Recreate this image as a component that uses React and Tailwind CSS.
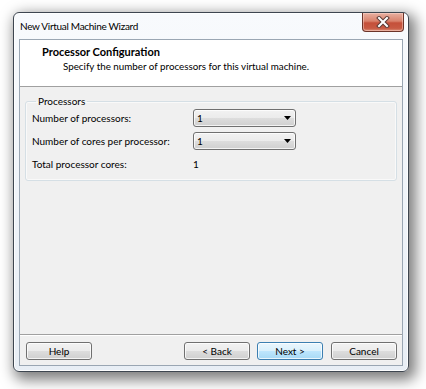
import React from "react";

const btnBase =
  "h-[18px] w-[66px] rounded-[3px] border text-[10px] leading-none text-black shadow-[inset_0_0_0_1px_rgba(255,255,255,0.75)]";
const btnGray =
  "border-[#707070] bg-[linear-gradient(to_bottom,#f2f2f2_0%,#ebebeb_50%,#dddddd_51%,#cfcfcf_100%)]";
const btnBlue =
  "border-[#3c7fb1] bg-[linear-gradient(to_bottom,#eaf6fd_0%,#d9f0fc_50%,#bee6fd_51%,#a7d9f5_100%)]";

function WinButton({ children, primary }) {
  return <button className={`${btnBase} ${primary ? btnBlue : btnGray}`}>{children}</button>;
}

function Combo({ value }) {
  return (
    <div className={`flex h-[18px] w-[103px] items-center justify-between rounded-[3px] border pl-[3px] pr-[4px] text-[10px] ${btnGray} shadow-[inset_0_0_0_1px_rgba(255,255,255,0.75)]`}>
      <span>{value}</span>
      <svg width="7" height="4" viewBox="0 0 7 4">
        <path d="M0 0H7L3.5 4Z" fill="#000" />
      </svg>
    </div>
  );
}

function CloseButton() {
  return (
    <div className="flex h-[19px] w-[42px] items-center justify-center rounded-b-[4px] border border-t-0 border-[#6b3329] bg-[linear-gradient(to_bottom,#e8b0a2_0%,#d9826c_45%,#c5503a_55%,#c85a43_85%,#dc937c_100%)] shadow-[inset_0_0_0_1px_rgba(255,225,215,0.45)]">
      <svg width="14" height="12" viewBox="0 0 14 12">
        <path d="M3 2L11 10M11 2L3 10" stroke="#5a3a36" strokeWidth="4" strokeLinecap="square" />
        <path d="M3 2L11 10M11 2L3 10" stroke="#ffffff" strokeWidth="2" strokeLinecap="square" />
      </svg>
    </div>
  );
}

export default function App() {
  return (
    <div className="h-[389px] w-[426px] bg-white pl-[13px] pt-[12px] font-['Lato',sans-serif] text-black">
      <div className="flex h-[360px] w-[396px] flex-col rounded-[6px] border border-[#3e4650] bg-[linear-gradient(to_bottom,#f8fafd,#e8eef5)] shadow-[4px_5px_14px_3px_rgba(0,0,0,0.5),inset_0_0_0_1px_rgba(255,255,255,0.85)]">
        <div className="flex h-[26px] items-start justify-between">
          <span className="self-center pl-[6px] text-[10px] leading-none tracking-[-0.3px]">New Virtual Machine Wizard</span>
          <div className="mr-[4px]">
            <CloseButton />
          </div>
        </div>
        <div className="flex flex-1 flex-col px-[5px] pb-[5px]">
          <div className="flex flex-1 flex-col border border-[#9aa6b3] bg-[#f0f0f0]">
            <div className="h-[47px] border-b border-[#a0a0a0] bg-white pl-[22px] pt-[5px]">
              <div className="text-[11px] font-bold leading-[14px]">Processor Configuration</div>
              <div className="ml-[21px] text-[9.8px] leading-[14px]">
                Specify the number of processors for this virtual machine.
              </div>
            </div>
            <div className="flex-1 pl-[5px] pr-[5px] pt-[7px]">
              <fieldset className="rounded-[3px] border border-[#d5dfe5] pb-[7px] pl-[6px] pt-[1px] shadow-[inset_0_0_0_1px_rgba(255,255,255,0.6)]">
                <legend className="ml-[4px] px-[2px] text-[10px] leading-[14px]">Processors</legend>
                <div className="grid grid-cols-[161px_103px] items-center gap-y-[5px] text-[10px]">
                  <span className="leading-[18px]">Number of processors:</span>
                  <Combo value="1" />
                  <span className="leading-[18px]">Number of cores per processor:</span>
                  <Combo value="1" />
                  <span className="leading-[18px]">Total processor cores:</span>
                  <span className="leading-[18px]">1</span>
                </div>
              </fieldset>
            </div>
            <div className="flex h-[31px] items-start justify-between border-t border-[#a0a0a0] pl-[6px] pr-[5px] pt-[7px] shadow-[inset_0_1px_0_#ffffff]">
              <WinButton>Help</WinButton>
              <div className="flex items-start">
                <WinButton>&lt; Back</WinButton>
                <div className="ml-[7px] flex">
                  <WinButton primary>Next &gt;</WinButton>
                </div>
                <div className="ml-[8px] flex">
                  <WinButton>Cancel</WinButton>
                </div>
              </div>
            </div>
          </div>
        </div>
      </div>
    </div>
  );
}
